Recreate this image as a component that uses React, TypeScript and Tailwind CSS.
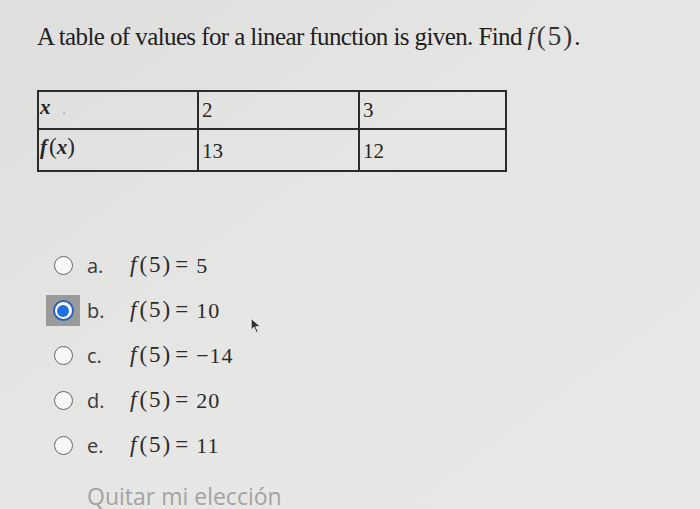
import React from 'react';

const options = [
  { letter: 'a.', value: '5', selected: false },
  { letter: 'b.', value: '10', selected: true },
  { letter: 'c.', value: '\u221214', selected: false },
  { letter: 'd.', value: '20', selected: false },
  { letter: 'e.', value: '11', selected: false },
];

const serif = { fontFamily: '"Liberation Serif", serif' };
const sans = { fontFamily: '"Open Sans", sans-serif' };

function FofFive() {
  return (
    <span className="text-[#2a2a2a]" style={serif}>
      <span className="italic text-[23px]">f</span>
      <span className="ml-[3px] text-[23px] tracking-[2px]">(5)</span>
    </span>
  );
}

function Radio({ selected }: { selected: boolean }) {
  if (selected) {
    return (
      <div className="w-[34px] h-[31px] bg-[#9a9a9a] flex items-center justify-center">
        <div className="w-[21px] h-[21px] rounded-full border-2 border-[#2d5fc7] bg-white flex items-center justify-center">
          <div className="w-[12px] h-[12px] rounded-full bg-[#1f6fe0]" />
        </div>
      </div>
    );
  }
  return (
    <div className="w-[34px] h-[31px] flex items-center justify-center">
      <div className="w-[19px] h-[19px] rounded-full border-[1.5px] border-[#666] bg-[#f7f7f5]" />
    </div>
  );
}

export default function App() {
  return (
    <div className="relative w-[700px] h-[509px] overflow-hidden bg-gradient-to-br from-[#dedede] via-[#e6e6e4] to-[#e9e9e7]">
      <div className="pl-[37px] pt-[20px]">
        <h1 className="text-[25px] leading-[32px] text-[#1e1e1e] tracking-[-0.6px]" style={serif}>
          A table of values for a linear function is given. Find{' '}
          <span className="italic text-[#333]">f</span>
          <span className="ml-[3px] text-[27px] text-[#333] tracking-[2px]">(5)</span>.
        </h1>

        <table
          className="mt-[37px] border-collapse border-2 border-[#2b2b2b] text-[21px] text-[#262626]"
          style={serif}
        >
          <tbody>
            <tr className="h-[35px]">
              <td className="w-[160px] border-2 border-[#2b2b2b] pl-[1px] pb-[4px]">
                <span className="italic font-bold">x</span>
                <span className="ml-3 text-[12px] text-[#777]">.</span>
              </td>
              <td className="w-[161px] border-2 border-[#2b2b2b] pl-[3px] pt-[2px]">2</td>
              <td className="w-[147px] border-2 border-[#2b2b2b] pl-[3px] pt-[2px]">3</td>
            </tr>
            <tr className="h-[37px]">
              <td className="border-2 border-[#2b2b2b] pl-[1px] pb-[6px]">
                <span className="italic font-bold">f</span>
                <span className="text-[23px] ml-[2px]">(</span>
                <span className="italic font-bold">x</span>
                <span className="text-[23px]">)</span>
              </td>
              <td className="border-2 border-[#2b2b2b] pl-[3px] pt-[3px]">13</td>
              <td className="border-2 border-[#2b2b2b] pl-[3px] pt-[3px]">12</td>
            </tr>
          </tbody>
        </table>

        <div className="mt-[78px] ml-[9px] flex flex-col gap-[14px]">
          {options.map((o) => (
            <div key={o.letter} className="flex items-center h-[31px]">
              <Radio selected={o.selected} />
              <span className="ml-[7px] w-[43px] text-[20px] text-[#3a3a3a]" style={sans}>
                {o.letter}
              </span>
              <span className="flex items-center">
                <FofFive />
                <span className="ml-[3px] text-[23px] text-[#2a2a2a]" style={serif}>
                  =
                </span>
                <span className="ml-[8px] text-[22px] text-[#2a2a2a] tracking-[1px]" style={serif}>
                  {o.value}
                </span>
              </span>
            </div>
          ))}
        </div>

        <div className="mt-[20px] ml-[50px] text-[23px] leading-[30px] text-[#a3a3a3]" style={sans}>
          Quitar mi elección
        </div>
      </div>

      <svg className="absolute left-[250px] top-[317px]" width="14" height="17" viewBox="0 0 12 14">
        <path d="M1 1 L1 11 L3.5 8.5 L5.5 13 L7 12.3 L5 8 L9 8 Z" fill="#333" stroke="#eee" strokeWidth="0.8" />
      </svg>
    </div>
  );
}
